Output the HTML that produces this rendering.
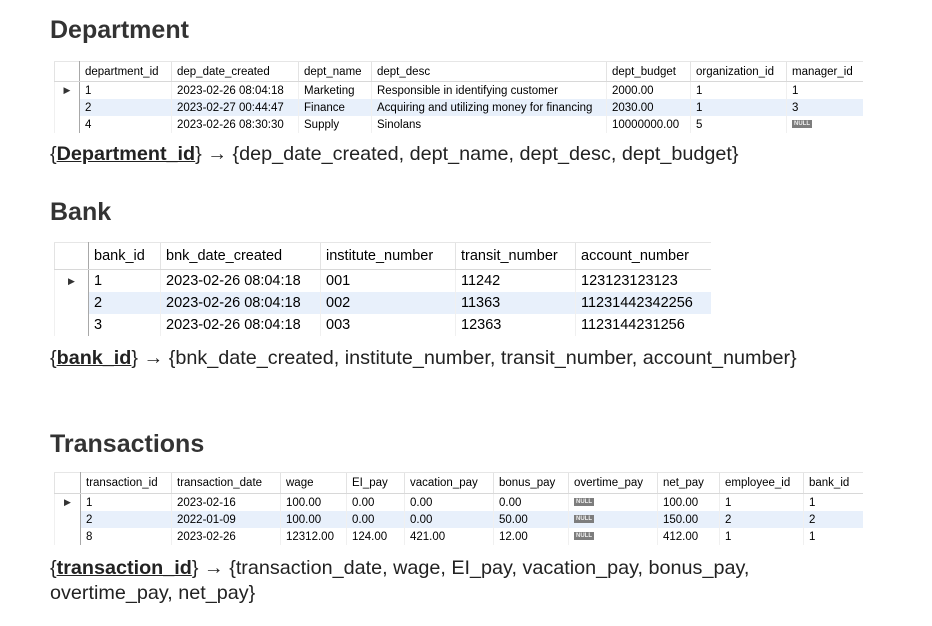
<!DOCTYPE html>
<html><head><meta charset="utf-8"><style>
body{margin:0;width:932px;height:626px;background:#fff;position:relative;font-family:"Liberation Sans",Arial,sans-serif;color:#000;overflow:hidden}
h1{position:absolute;margin:0;font-size:25px;font-weight:bold;color:#333;left:50px}
.fd{position:absolute;left:50px;font-size:19.8px;color:#222;line-height:25px}
.fd b{text-decoration:underline}
table{position:absolute;border-collapse:collapse;table-layout:fixed;font-family:"Liberation Sans",Arial,sans-serif}
td{padding:0 0 0 5px;white-space:nowrap;overflow:hidden;border-left:1px solid #f0f0f0}
tr.h td{border-bottom:1px solid #d8d8d8;border-top:1px solid #e6e6e6;border-left:1px solid #e3e3e3}
tr.s td{background:#e8f0fb}
td.rh{background:#fff!important;border-right:1px solid #a8a8a8;padding:0;font-size:9px;text-align:center;color:#333}
.n{display:inline-block;background:#7d7d7d;color:#eee;font-size:6px;font-weight:bold;padding:0 2px;line-height:8px;vertical-align:top;margin-top:1px}
.t1{font-size:11.5px}.t1 td{height:17px}
.t2{font-size:14.5px}.t2 td{height:22px}
</style></head><body>
<h1 style="top:16px">Department</h1>
<table class="t1" style="left:54px;top:61px;width:808px">
<colgroup><col style="width:25px"><col style="width:92px"><col style="width:127px"><col style="width:73px"><col style="width:235px"><col style="width:84px"><col style="width:96px"><col style="width:76px"></colgroup>
<tr class="h" style="height:20px"><td class="rh"></td><td>department_id</td><td>dep_date_created</td><td>dept_name</td><td>dept_desc</td><td>dept_budget</td><td>organization_id</td><td>manager_id</td></tr>
<tr><td class="rh">▶</td><td>1</td><td>2023-02-26 08:04:18</td><td>Marketing</td><td>Responsible in identifying customer</td><td>2000.00</td><td>1</td><td>1</td></tr>
<tr class="s"><td class="rh"></td><td>2</td><td>2023-02-27 00:44:47</td><td>Finance</td><td>Acquiring and utilizing money for financing</td><td>2030.00</td><td>1</td><td>3</td></tr>
<tr><td class="rh"></td><td>4</td><td>2023-02-26 08:30:30</td><td>Supply</td><td>Sinolans</td><td>10000000.00</td><td>5</td><td><span class="n">NULL</span></td></tr>
</table>
<div class="fd" style="top:142px">{<b>Department_id</b>} → {dep_date_created, dept_name, dept_desc, dept_budget}</div>

<h1 style="top:198px">Bank</h1>
<table class="t2" style="left:54px;top:242px;width:656px">
<colgroup><col style="width:34px"><col style="width:72px"><col style="width:160px"><col style="width:135px"><col style="width:120px"><col style="width:135px"></colgroup>
<tr class="h"><td class="rh" style="height:26px"></td><td>bank_id</td><td>bnk_date_created</td><td>institute_number</td><td>transit_number</td><td>account_number</td></tr>
<tr><td class="rh">▶</td><td>1</td><td>2023-02-26 08:04:18</td><td>001</td><td>11242</td><td>123123123123</td></tr>
<tr class="s"><td class="rh"></td><td>2</td><td>2023-02-26 08:04:18</td><td>002</td><td>11363</td><td>11231442342256</td></tr>
<tr><td class="rh"></td><td>3</td><td>2023-02-26 08:04:18</td><td>003</td><td>12363</td><td>1123144231256</td></tr>
</table>
<div class="fd" style="top:346px">{<b>bank_id</b>} → {bnk_date_created, institute_number, transit_number, account_number}</div>

<h1 style="top:430px">Transactions</h1>
<table class="t1" style="left:54px;top:472px;width:808px">
<colgroup><col style="width:26px"><col style="width:91px"><col style="width:109px"><col style="width:66px"><col style="width:58px"><col style="width:89px"><col style="width:75px"><col style="width:89px"><col style="width:62px"><col style="width:84px"><col style="width:59px"></colgroup>
<tr class="h" style="height:21px"><td class="rh"></td><td>transaction_id</td><td>transaction_date</td><td>wage</td><td>EI_pay</td><td>vacation_pay</td><td>bonus_pay</td><td>overtime_pay</td><td>net_pay</td><td>employee_id</td><td>bank_id</td></tr>
<tr><td class="rh">▶</td><td>1</td><td>2023-02-16</td><td>100.00</td><td>0.00</td><td>0.00</td><td>0.00</td><td><span class="n">NULL</span></td><td>100.00</td><td>1</td><td>1</td></tr>
<tr class="s"><td class="rh"></td><td>2</td><td>2022-01-09</td><td>100.00</td><td>0.00</td><td>0.00</td><td>50.00</td><td><span class="n">NULL</span></td><td>150.00</td><td>2</td><td>2</td></tr>
<tr><td class="rh"></td><td>8</td><td>2023-02-26</td><td>12312.00</td><td>124.00</td><td>421.00</td><td>12.00</td><td><span class="n">NULL</span></td><td>412.00</td><td>1</td><td>1</td></tr>
</table>
<div class="fd" style="top:556px">{<b>transaction_id</b>} → {transaction_date, wage, EI_pay, vacation_pay, bonus_pay,<br>overtime_pay, net_pay}</div>
</body></html>
